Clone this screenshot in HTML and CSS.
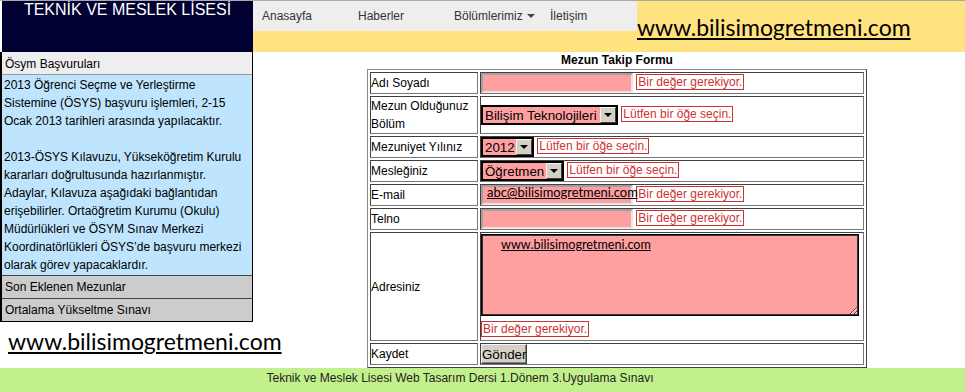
FILE: index.html
```html
<!DOCTYPE html>
<html lang="tr">
<head>
<meta charset="utf-8">
<title>Teknik ve Meslek Lisesi</title>
<link rel="stylesheet" href="styles.css">
</head>
<body>
<div class="page">
  <header class="top">
    <div class="brand">TEKNİK VE MESLEK LİSESİ</div>
    <div class="topbar">
      <nav class="nav">
        <a class="nav-item">Anasayfa</a>
        <a class="nav-item">Haberler</a>
        <a class="nav-item">Bölümlerimiz <span class="caret"></span></a>
        <a class="nav-item">İletişim</a>
      </nav>
      <a class="wm wm-top">www.bilisimogretmeni.com</a>
    </div>
  </header>
  <div class="main">
    <aside class="side">
      <div class="box">
        <div class="box-head">Ösym Başvuruları</div>
        <div class="box-body">2013 Öğrenci Seçme ve Yerleştirme<br>Sistemine (ÖSYS) başvuru işlemleri, 2-15<br>Ocak 2013 tarihleri arasında yapılacaktır.<br><br>2013-ÖSYS Kılavuzu, Yükseköğretim Kurulu<br>kararları doğrultusunda hazırlanmıştır.<br>Adaylar, Kılavuza aşağıdaki bağlantıdan<br>erişebilirler. Ortaöğretim Kurumu (Okulu)<br>Müdürlükleri ve ÖSYM Sınav Merkezi<br>Koordinatörlükleri ÖSYS’de başvuru merkezi<br>olarak görev yapacaklardır.</div>
        <div class="box-item">Son Eklenen Mezunlar</div>
        <div class="box-item">Ortalama Yükseltme Sınavı</div>
      </div>
      <a class="wm wm-side">www.bilisimogretmeni.com</a>
    </aside>
    <section class="content">
      <div class="form-wrap">
        <div class="form-title">Mezun Takip Formu</div>
        <table class="form">
          <tr>
            <td class="lbl">Adı Soyadı</td>
            <td class="fld"><input class="txt" type="text"> <span class="err">Bir değer gerekiyor.</span></td>
          </tr>
          <tr>
            <td class="lbl">Mezun Olduğunuz Bölüm</td>
            <td class="fld"><span class="sel sel-bolum"><select><option>Bilişim Teknolojileri</option></select><span class="arrow"></span></span> <span class="err">Lütfen bir öğe seçin.</span></td>
          </tr>
          <tr>
            <td class="lbl">Mezuniyet Yılınız</td>
            <td class="fld"><span class="sel sel-yil"><select><option>2012</option></select><span class="arrow"></span></span> <span class="err">Lütfen bir öğe seçin.</span></td>
          </tr>
          <tr>
            <td class="lbl">Mesleğiniz</td>
            <td class="fld"><span class="sel sel-meslek"><select><option>Öğretmen</option></select><span class="arrow"></span></span> <span class="err">Lütfen bir öğe seçin.</span></td>
          </tr>
          <tr>
            <td class="lbl">E-mail</td>
            <td class="fld"><span class="field"><input class="txt" type="text"><span class="wm wm-mail">abc@bilisimogretmeni.com</span></span> <span class="err">Bir değer gerekiyor.</span></td>
          </tr>
          <tr>
            <td class="lbl">Telno</td>
            <td class="fld"><input class="txt" type="text"> <span class="err">Bir değer gerekiyor.</span></td>
          </tr>
          <tr>
            <td class="lbl">Adresiniz</td>
            <td class="fld">
              <div class="area-wrap"><textarea class="area"></textarea><span class="wm wm-area">www.bilisimogretmeni.com</span></div>
              <div class="err-line"><span class="err">Bir değer gerekiyor.</span></div>
            </td>
          </tr>
          <tr>
            <td class="lbl">Kaydet</td>
            <td class="fld"><button class="btn" type="button">Gönder</button></td>
          </tr>
        </table>
      </div>
    </section>
  </div>
  <footer class="foot">
    <div class="foot-inner">Teknik ve Meslek Lisesi Web Tasarım Dersi 1.Dönem 3.Uygulama Sınavı</div>
  </footer>
</div>
</body>
</html>
```

FILE: styles.css
```css
* { box-sizing: border-box; }
html, body { margin: 0; padding: 0; }
body {
  font-family: "Liberation Sans", Arial, sans-serif;
  font-size: 12px;
  line-height: 18px;
  color: #000;
  background: #fff;
  border-top: 1px solid #a9a9a9;
}

/* header */
.top { display: flex; height: 51px; }
.brand {
  width: 251px;
  margin-left: 2px;
  background: #000033;
  color: #fff;
  font-size: 16px;
  line-height: 18px;
  text-align: center;
}
.topbar {
  flex: 1;
  display: flex;
  align-items: flex-start;
  background: #ffe381;
}
.nav { display: flex; width: 384px; height: 30px; background: #eeeeee; }
.nav-item {
  width: 96px;
  padding-left: 9px;
  line-height: 30px;
  color: #333;
  text-decoration: none;
  white-space: nowrap;
}
.caret {
  display: inline-block;
  width: 0; height: 0;
  border-left: 4px solid transparent;
  border-right: 4px solid transparent;
  border-top: 4px solid #444;
  vertical-align: middle;
  margin-left: 1px;
  margin-top: -2px;
}

/* watermarks */
.wm {
  font-family: Lato, "Open Sans", sans-serif;
  color: #000;
  text-decoration: underline;
  white-space: nowrap;
}
.wm-top {
  font-size: 23px;
  line-height: 26px;
  margin-top: 13px;
  text-decoration-thickness: 2px;
  text-underline-offset: 2px;
}
.wm-side {
  display: block;
  font-size: 23px;
  line-height: 26px;
  margin: 6px 0 0 8px;
  text-decoration-thickness: 2px;
  text-underline-offset: 2px;
}

/* main */
.main { display: flex; align-items: flex-start; }
.side { width: 253px; flex: none; }
.box {
  border-left: 2px solid #000;
  border-right: 1px solid #000;
  border-bottom: 1px solid #000;
}
.box-head {
  background: #eeeeee;
  padding: 3px 3px 1px;
  border-bottom: 1px solid #999;
}
.box-body {
  background: #bee5fd;
  padding: 1px 2px 1px;
  white-space: nowrap;
}
.box-item {
  background: #cccccc;
  border-top: 1px solid #444;
  padding: 2px 3px 2px;
}

.content { flex: 1; padding-left: 114px; }
.form-wrap { width: 500px; }
.form-title {
  font-weight: bold;
  text-align: center;
  line-height: 17px;
}
.form {
  width: 500px;
  border: 1px solid;
  border-color: #8a8a8a #404040 #404040 #8a8a8a;
  border-spacing: 2px;
}
.form td {
  box-sizing: content-box;
  border: 1px solid;
  border-color: #404040 #777 #777 #404040;
  padding: 0;
  vertical-align: middle;
  line-height: 18px;
}
.form td.lbl { width: 106px; }

.txt {
  width: 152px;
  height: 20px;
  margin: 0;
  padding: 0 2px;
  border: 2px solid;
  border-color: #a0a0a0 #e6e6e6 #e6e6e6 #a0a0a0;
  background: #ff9f9f;
  font: 13.33px "Liberation Sans", Arial, sans-serif;
  vertical-align: middle;
}
.err {
  color: #cc3333;
  border: 1px solid #cc3333;
  padding: 0 1px;
}

.sel {
  display: inline-flex;
  height: 20px;
  border: 2px solid #000;
  background: #ff9f9f;
  vertical-align: middle;
}
.sel select {
  appearance: none;
  -webkit-appearance: none;
  flex: 1;
  min-width: 0;
  height: 16px;
  margin: 0;
  padding: 0 0 0 2px;
  border: 0;
  background: transparent;
  color: #000;
  font: 13.33px "Liberation Sans", Arial, sans-serif;
  outline: none;
}
.sel .arrow {
  flex: none;
  width: 16px;
  height: 16px;
  background: #d4d0c8;
  border: 1px solid;
  border-color: #f4f4f4 #404040 #404040 #f4f4f4;
  display: flex;
  align-items: center;
  justify-content: center;
}
.sel .arrow::after {
  content: "";
  width: 0; height: 0;
  border-left: 4px solid transparent;
  border-right: 4px solid transparent;
  border-top: 4px solid #000;
}
.sel-bolum { width: 137px; }
.sel-yil { width: 53px; }
.sel-meslek { width: 83px; }

.field { position: relative; display: inline-block; vertical-align: middle; line-height: 0; }
.wm-mail {
  position: absolute;
  left: 6px;
  top: -1px;
  font-size: 12.9px;
  line-height: 16px;
}

.area-wrap { position: relative; }
.area {
  display: block;
  width: 378px;
  height: 82px;
  margin: 1px 0 0;
  border: 1px solid #000;
  box-shadow: inset 0 0 0 1px #333;
  background: #ff9f9f;
  font: 13.33px "Liberation Sans", Arial, sans-serif;
  resize: both;
}
.wm-area {
  position: absolute;
  left: 20px;
  top: 3px;
  font-size: 12.6px;
  line-height: 16px;
}
.err-line { margin: 4px 0 2px; }

.btn {
  width: 46px;
  height: 20px;
  margin: 0;
  padding: 0;
  font: 13.33px "Liberation Sans", Arial, sans-serif;
  color: #000;
  background: #d4d0c8;
  border: 1px solid;
  border-color: #f4f4f4 #404040 #404040 #f4f4f4;
  box-shadow: inset -1px -1px 0 #808080;
  vertical-align: middle;
}

/* footer */
.foot { background: #c2f08c; padding: 1px 0 10px; }
.foot-inner { width: 920px; text-align: center; color: #222; }
```
